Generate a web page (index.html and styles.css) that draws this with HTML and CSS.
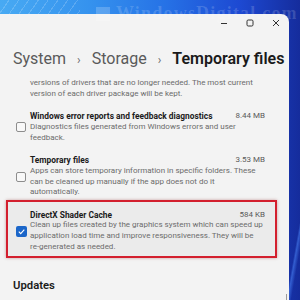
FILE: index.html
```html
<!DOCTYPE html>
<html lang="en">
<head>
  <meta charset="UTF-8">
  <meta name="viewport" content="width=device-width, initial-scale=1.0">
  <title>Temporary files</title>
  <link rel="stylesheet" href="styles.css">
</head>
<body>
  <div class="wallpaper">
    <span class="watermark"><span class="wm-logo"></span>WindowsDigital.com</span>
  </div>

  <div class="window">
    <div class="titlebar">
      <span class="ctl">
        <svg width="10" height="10" viewBox="0 0 10 10"><path d="M2 5.5h6" stroke="#333" stroke-width="1"/></svg>
      </span>
      <span class="ctl">
        <svg width="10" height="10" viewBox="0 0 10 10"><rect x="2" y="2" width="6" height="6" rx="1.2" fill="none" stroke="#333" stroke-width="1"/></svg>
      </span>
      <span class="ctl">
        <svg width="10" height="10" viewBox="0 0 10 10"><path d="M2 2l6 6M8 2l-6 6" stroke="#333" stroke-width="1"/></svg>
      </span>
    </div>

    <div class="breadcrumb">
      <span class="crumb">System</span>
      <span class="chev">›</span>
      <span class="crumb">Storage</span>
      <span class="chev">›</span>
      <span class="crumb current">Temporary files</span>
    </div>

    <div class="list">
      <!-- previous item, scrolled so only the end of its text shows -->
      <div class="item partial">
        <p class="desc">versions of drivers that are no longer needed. The most current version of each driver package will be kept.</p>
      </div>

      <div class="item">
        <span class="check"></span>
        <span class="name">Windows error reports and feedback diagnostics</span>
        <span class="size">8.44 MB</span>
        <p class="desc">Diagnostics files generated from Windows errors and user feedback.</p>
      </div>

      <div class="item">
        <span class="check"></span>
        <span class="name">Temporary files</span>
        <span class="size">3.53 MB</span>
        <p class="desc">Apps can store temporary information in specific folders. These can be cleaned up manually if the app does not do it automatically.</p>
      </div>

      <div class="item marked">
        <span class="check checked">
          <svg width="11" height="11" viewBox="0 0 11 11"><path d="M2.8 5.7l1.9 1.9 3.6-4" fill="none" stroke="#fff" stroke-width="1.1"/></svg>
        </span>
        <span class="name">DirectX Shader Cache</span>
        <span class="size">584 KB</span>
        <p class="desc">Clean up files created by the graphics system which can speed up application load time and improve responsiveness. They will be <span class="nowrap">re-generated</span> as needed.</p>
      </div>
    </div>

    <h2 class="section">Updates</h2>
    <span class="scrollbar"></span>
  </div>
</body>
</html>
```

FILE: styles.css
```css
body {
  margin: 0;
  width: 300px;
  height: 300px;
  overflow: hidden;
  position: relative;
  font-family: Roboto, "Noto Sans", sans-serif;
  color: #1b1b1b;
  background-color: #1b3bc4;
  background-image:
    linear-gradient(100deg, transparent 0 96%, rgba(80, 140, 255, 0.5) 96.5%, transparent 97.5%),
    linear-gradient(90deg, #48aaf3 0%, #3592ee 30%, #2672e6 55%, #1d49d2 80%, #152c9c 100%);
}

.wallpaper {
  height: 14px;
  background-image:
    repeating-linear-gradient(125deg, transparent 0 7px, rgba(255, 255, 255, 0.18) 7px 8px);
  background-size: 80px 14px;
  background-repeat: no-repeat;
}

.watermark {
  position: absolute;
  left: 96px;
  top: 3px;
  font-family: "Liberation Serif", serif;
  font-size: 18px;
  font-weight: bold;
  letter-spacing: 1.2px;
  color: rgba(255, 255, 255, 0.16);
  display: flex;
  align-items: center;
  gap: 6px;
  z-index: 2;
  white-space: nowrap;
}

.wm-logo {
  width: 14px;
  height: 14px;
  background: rgba(255, 255, 255, 0.2);
}

.window {
  position: relative;
  width: 289px;
  height: 286px;
  background: #f3f3f3;
  border-top-right-radius: 8px;
}

.titlebar {
  display: flex;
  justify-content: flex-end;
  height: 18px;
}

.ctl {
  width: 26px;
  display: flex;
  align-items: center;
  justify-content: center;
}

.breadcrumb {
  display: flex;
  align-items: baseline;
  white-space: nowrap;
  padding-left: 13px;
  margin-top: 16.5px;
  height: 20px;
  line-height: 20px;
  font-size: 16px;
  color: #5a5a5a;
}

.chev {
  font-size: 12px;
  color: #6a6a6a;
  margin: 0 11px 0 11px;
}

.crumb.current {
  color: #1a1a1a;
  font-weight: 600;
}

.list {
  display: flex;
  flex-direction: column;
  padding-left: 16px;
  width: 249px;
  margin-top: 9.5px;
}

.item {
  display: grid;
  grid-template-columns: 11px 1fr auto;
  column-gap: 3px;
  margin-top: 11.5px;
  font-size: 8px;
  line-height: 10.8px;
}

.item.partial {
  margin-top: 0;
}

.check {
  grid-column: 1;
  grid-row: 1 / 3;
  align-self: center;
  box-sizing: border-box;
  width: 10px;
  height: 10px;
  border: 1px solid #8d8d8d;
  border-radius: 2px;
  background: #f8f8f8;
}

.check.checked {
  width: 11px;
  height: 11px;
  border: none;
  background: #1b66c9;
  display: flex;
}

.name {
  grid-column: 2;
  grid-row: 1;
  font-size: 8.4px;
  font-weight: 700;
  color: #1b1b1b;
}

.size {
  grid-column: 3;
  grid-row: 1;
  color: #5a5a5a;
}

.desc {
  grid-column: 2 / 4;
  grid-row: 2;
  margin: 0;
  color: #6b6b6b;
}

.nowrap {
  white-space: nowrap;
}

.item.marked {
  margin: 1.8px -12px 0 -10px;
  padding: 7.7px 10px 3.1px 8px;
  border: 2px solid #d31f2e;
  background: #ebebeb;
  box-shadow: 0 0 3px rgba(120, 0, 0, 0.35);
}

.section {
  margin: 21px 0 0 13px;
  font-size: 11.3px;
  line-height: 14px;
  font-weight: 600;
  color: #1b1b1b;
}

.scrollbar {
  position: absolute;
  right: 2px;
  bottom: 0;
  width: 1px;
  height: 6px;
  background: #9a9a9a;
}
```
